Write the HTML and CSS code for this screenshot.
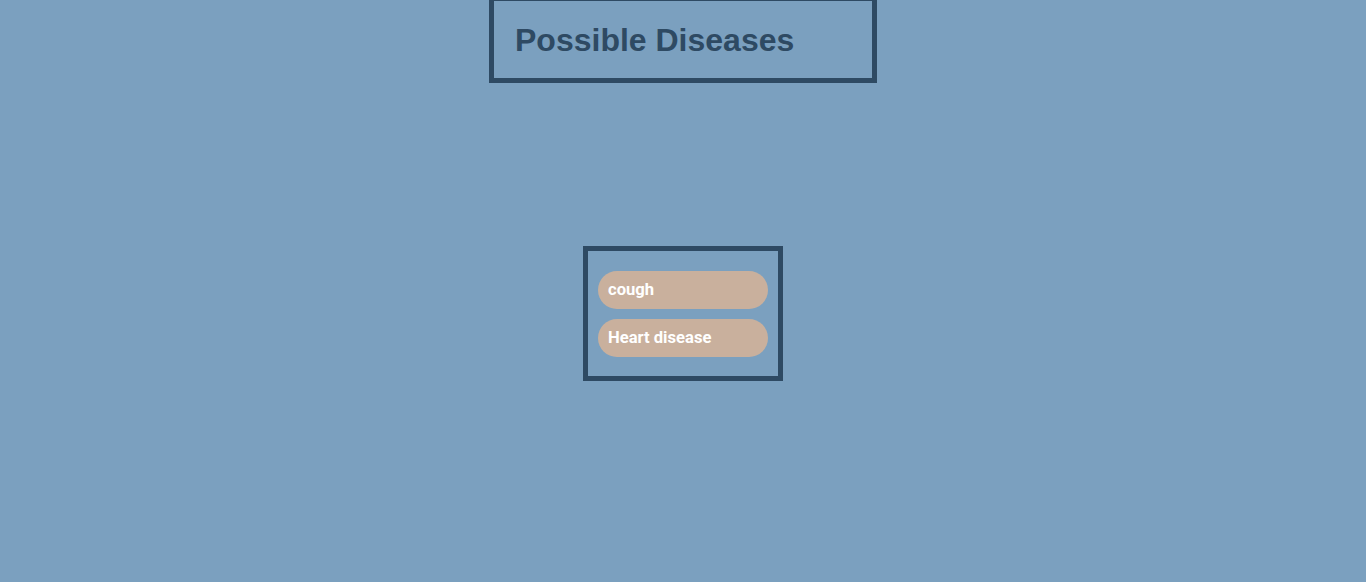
FILE: index.html
```html
<!DOCTYPE html>
<html>
<head>
<meta charset="utf-8">
<link rel="stylesheet" href="styles.css">
</head>
<body>
<div class="page">
  <h1 class="title">Possible Diseases</h1>
  <div class="list">
    <div class="pill">cough</div>
    <div class="pill">Heart disease</div>
  </div>
</div>
</body>
</html>
```
FILE: styles.css
```css
html, body {
  margin: 0;
  padding: 0;
  background: #7ba0bf;
  height: 100%;
}
.page {
  display: flex;
  flex-direction: column;
  align-items: center;
}
.title {
  box-sizing: border-box;
  width: 388px;
  height: 87px;
  margin: -4px 0 0 0;
  border: 5px solid #2e4a63;
  padding: 21px 0 0 21px;
  font-family: "Liberation Sans", Arial, sans-serif;
  font-size: 32px;
  font-weight: bold;
  line-height: 37px;
  color: #2e4a63;
}
.list {
  box-sizing: border-box;
  width: 200px;
  margin-top: 163px;
  border: 5px solid #2e4a63;
  padding: 20px 10px 19px;
  display: flex;
  flex-direction: column;
  gap: 10px;
}
.pill {
  height: 38px;
  box-sizing: border-box;
  border-radius: 19px;
  background: #c9b09d;
  color: #ffffff;
  font-family: Roboto, "Liberation Sans", sans-serif;
  font-weight: bold;
  font-size: 16.6px;
  line-height: 38px;
  padding-left: 10px;
}
```
